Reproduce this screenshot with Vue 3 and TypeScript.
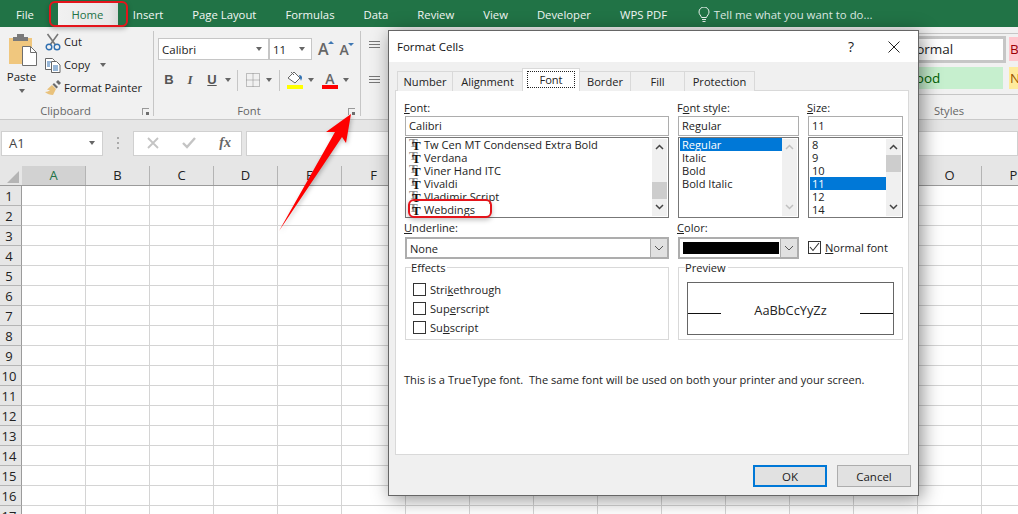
<script setup lang="ts">
const tabs = ["Insert", "Page Layout", "Formulas", "Data", "Review", "View", "Developer", "WPS PDF"]
const columns = "ABCDEFGHIJKLMNOP".split("")
const rows = Array.from({ length: 17 }, (_, i) => i + 1)
const fonts = ["Tw Cen MT Condensed Extra Bold", "Verdana", "Viner Hand ITC", "Vivaldi", "Vladimir Script", "Webdings"]
const styles = ["Regular", "Italic", "Bold", "Bold Italic"]
const sizes = ["8", "9", "10", "11", "12", "14"]
const dialogTabs = ["Number", "Alignment", "Font", "Border", "Fill", "Protection"]
</script>

<template>
  <div class="app">
    <header class="tabbar">
      <span class="tab">File</span>
      <span class="tab tab-home">Home</span>
      <span v-for="t in tabs" :key="t" class="tab">{{ t }}</span>
      <span class="tell">
        <svg width="12" height="16" viewBox="0 0 12 16" fill="none" stroke="#e8f1ec" stroke-width="1">
          <path d="M3.500 10.500C3 8.500 1 7.500 1 5a5 5 0 0 1 10 0c0 2.500-2 3.500-2.500 5.500z" />
          <path d="M4 12.500h4M4.500 14.500h3" />
        </svg>
        Tell me what you want to do...
      </span>
    </header>

    <section class="ribbon">
      <div class="group clipboard">
        <div class="group-body clip-body">
          <div class="paste">
            <svg width="30" height="32" viewBox="0 0 30 32">
              <path d="M1 4h23v26H1z" fill="#f0c77e" />
              <path d="M5 3h15v4H5z" fill="#7a7a7a" />
              <path d="M9 0h7v4H9z" fill="#7a7a7a" />
              <path d="M14.500 12.500h8l6 6v13h-14z" fill="#fff" stroke="#6e6e6e" />
              <path d="M22.500 12.500v6h6" fill="none" stroke="#6e6e6e" />
            </svg>
            <span class="paste-label">Paste</span>
            <i class="caret"></i>
          </div>
          <div class="clip-actions">
            <div class="clip-row">
              <svg width="16" height="18" viewBox="0 0 16 18" fill="none">
                <path d="M2.500 1l8 11M13 1L5 12" stroke="#777" stroke-width="1.600" />
                <circle cx="4" cy="14" r="2.800" stroke="#2f6fb0" stroke-width="1.400" />
                <circle cx="12" cy="14" r="2.800" stroke="#2f6fb0" stroke-width="1.400" />
              </svg>
              <span>Cut</span>
            </div>
            <div class="clip-row">
              <svg width="16" height="16" viewBox="0 0 16 16" fill="#fff" stroke="#666">
                <path d="M.5 1.500h7l2 2v9h-9z" />
                <path d="M6.500 4.500h5l3.500 3.500v7.500h-8.500z" />
                <path d="M2 5h4M2 7h3M2 9h3M8 9h5M8 11h5M8 13h5" stroke="#2f6fb0" />
              </svg>
              <span>Copy</span>
              <i class="caret copy-caret"></i>
            </div>
            <div class="clip-row">
              <svg width="16" height="16" viewBox="0 0 16 16">
                <path d="M9 3l4 4-1.500 1.500-4-4z" fill="#6b6b6b" />
                <path d="M11 2l2-2 3 3-2 2z" fill="#6b6b6b" />
                <path d="M7 5l4 4-3 6c-3 0-6-1-8-3 2 0 4-1 5-2-1 0-2 0-3-.5z" fill="#e9c27c" />
              </svg>
              <span>Format Painter</span>
            </div>
          </div>
        </div>
        <div class="group-foot">Clipboard<i class="launcher"></i></div>
      </div>

      <div class="group fontgroup">
        <div class="group-body">
          <div class="font-row">
            <div class="rb-select name"><span>Calibri</span><i class="caret"></i></div>
            <div class="rb-select size"><span>11</span><i class="caret"></i></div>
            <span class="grow">A<i class="up"></i></span>
            <span class="shrink">A<i class="down"></i></span>
          </div>
          <div class="font-row second">
            <b class="fmt fmt-b">B</b>
            <i class="fmt fmt-i">I</i>
            <u class="fmt fmt-u">U</u>
            <i class="caret c-u"></i>
            <span class="vsep sep1"></span>
            <svg class="borders" width="14" height="14" viewBox="0 0 14 14" fill="none" stroke="#888" stroke-dasharray="1 1">
              <path d="M.5.5h13v13h-13zM7 .5v13M.5 7h13" />
            </svg>
            <i class="caret c-b"></i>
            <span class="vsep sep2"></span>
            <span class="color-btn fill">
              <svg width="16" height="14" viewBox="0 0 16 14">
                <path d="M1 7l6-6 6 6-5 5z" fill="#fff" stroke="#666" />
                <path d="M4 1l3 3" stroke="#666" fill="none" />
                <path d="M12 4c2 0 3 1 3 3l-1 3-1-3z" fill="#2f6fb0" />
              </svg>
              <i class="bar bar-y"></i>
            </span>
            <i class="caret c-f"></i>
            <span class="color-btn">
              <span class="color-a">A</span>
              <i class="bar bar-r"></i>
            </span>
            <i class="caret c-a"></i>
          </div>
        </div>
        <div class="group-foot">Font<i class="launcher"></i></div>
      </div>

      <div class="group align">
        <div class="align-lines"></div>
        <div class="align-lines"></div>
      </div>

      <div class="group stylesgroup">
        <div class="gallery">
          <div class="st st-normal">Normal</div>
          <div class="st st-bad">Bad</div>
          <div class="st st-good">Good</div>
          <div class="st st-neutral">Neutral</div>
        </div>
        <div class="group-foot">Styles</div>
      </div>
    </section>

    <div class="band"></div>

    <section class="formula">
      <div class="namebox"><span>A1</span><i class="caret"></i></div>
      <span class="dots"></span>
      <div class="fbtns">
        <svg width="12" height="12" viewBox="0 0 12 12" stroke="#c4c4c4" stroke-width="1.800"><path d="M1 1l10 10M11 1L1 11" /></svg>
        <svg width="14" height="12" viewBox="0 0 14 12" fill="none" stroke="#c4c4c4" stroke-width="2.400"><path d="M1 6l4 4 8-9" /></svg>
        <span class="fx">fx</span>
      </div>
      <div class="finput"></div>
    </section>

    <section class="sheet">
      <div class="colhead">
        <div class="corner"><i></i></div>
        <div v-for="c in columns" :key="c" class="col" :class="{ active: c === 'A' }">{{ c }}</div>
      </div>
      <div v-for="r in rows" :key="r" class="row">
        <div class="rowhead">{{ r }}</div>
        <div v-for="c in columns" :key="c" class="cell"></div>
      </div>
    </section>

    <div class="dialog">
      <div class="titlebar">
        <span class="title">Format Cells</span>
        <span class="help">?</span>
        <svg class="close" width="12" height="12" viewBox="0 0 12 12" stroke="#222" stroke-width="1"><path d="M.5.5l11 11M11.500.5l-11 11" /></svg>
      </div>
      <div class="dlg-body">
        <div class="dlg-tabs">
          <span v-for="t in dialogTabs" :key="t" class="dtab" :class="['dtab-' + t.toLowerCase(), { on: t === 'Font' }]">
            <span :class="{ focus: t === 'Font' }">{{ t }}</span>
          </span>
        </div>
        <div class="panel">
          <div class="grid">
            <div class="field">
              <label><u>F</u>ont:</label>
              <div class="txt">Calibri</div>
              <div class="list">
                <div class="items">
                  <div v-for="f in fonts" :key="f" class="item fontitem">
                    <span class="tt"><span class="t1">T</span><span class="t2">T</span></span>{{ f }}
                  </div>
                </div>
                <div class="scroll">
                  <svg class="chev" width="9" height="6" viewBox="0 0 9 6" fill="none" stroke="#444" stroke-width="1.500"><path d="M1 5l3.500-3.500L8 5" /></svg>
                  <i class="thumb thumb-font"></i>
                  <svg class="chev" width="9" height="6" viewBox="0 0 9 6" fill="none" stroke="#444" stroke-width="1.500"><path d="M1 1l3.500 3.500L8 1" /></svg>
                </div>
              </div>
            </div>
            <div class="field">
              <label>F<u>o</u>nt style:</label>
              <div class="txt">Regular</div>
              <div class="list">
                <div class="items">
                  <div v-for="s in styles" :key="s" class="item" :class="{ sel: s === 'Regular' }">{{ s }}</div>
                </div>
                <div class="scroll">
                  <svg class="chev" width="9" height="6" viewBox="0 0 9 6" fill="none" stroke="#c0c0c0" stroke-width="1.500"><path d="M1 5l3.500-3.500L8 5" /></svg>
                  <svg class="chev" width="9" height="6" viewBox="0 0 9 6" fill="none" stroke="#c0c0c0" stroke-width="1.500"><path d="M1 1l3.500 3.500L8 1" /></svg>
                </div>
              </div>
            </div>
            <div class="field">
              <label><u>S</u>ize:</label>
              <div class="txt">11</div>
              <div class="list">
                <div class="items">
                  <div v-for="s in sizes" :key="s" class="item" :class="{ sel: s === '11' }">{{ s }}</div>
                </div>
                <div class="scroll">
                  <svg class="chev" width="9" height="6" viewBox="0 0 9 6" fill="none" stroke="#444" stroke-width="1.500"><path d="M1 5l3.500-3.500L8 5" /></svg>
                  <i class="thumb thumb-size"></i>
                  <svg class="chev" width="9" height="6" viewBox="0 0 9 6" fill="none" stroke="#444" stroke-width="1.500"><path d="M1 1l3.500 3.500L8 1" /></svg>
                </div>
              </div>
            </div>

            <div class="field row2">
              <label><u>U</u>nderline:</label>
              <div class="combo">
                <span>None</span>
                <span class="combo-btn"><svg width="10" height="6" viewBox="0 0 10 6" fill="none" stroke="#555"><path d="M1 1l4 4 4-4" /></svg></span>
              </div>
            </div>
            <div class="field row2">
              <label><u>C</u>olor:</label>
              <div class="combo">
                <span class="swatch"></span>
                <span class="combo-btn"><svg width="10" height="6" viewBox="0 0 10 6" fill="none" stroke="#555"><path d="M1 1l4 4 4-4" /></svg></span>
              </div>
            </div>
            <div class="normalfont">
              <span class="check on">
                <svg width="11" height="10" viewBox="0 0 11 10" fill="none" stroke="#333" stroke-width="1.100"><path d="M1 5l3 3.500L10 1" /></svg>
              </span>
              <span><u>N</u>ormal font</span>
            </div>

            <fieldset class="box effects">
              <legend>Effects</legend>
              <div class="opt"><span class="check"></span><span>Stri<u>k</u>ethrough</span></div>
              <div class="opt"><span class="check"></span><span>Sup<u>e</u>rscript</span></div>
              <div class="opt"><span class="check"></span><span>Su<u>b</u>script</span></div>
            </fieldset>
            <fieldset class="box previewbox">
              <legend>Preview</legend>
              <div class="preview">
                <i class="pline"></i>
                <span class="sample">AaBbCcYyZz</span>
                <i class="pline"></i>
              </div>
            </fieldset>
          </div>
          <p class="note">This is a TrueType font.&nbsp; The same font will be used on both your printer and your screen.</p>
        </div>
        <div class="actions">
          <span class="btn ok">OK</span>
          <span class="btn">Cancel</span>
        </div>
      </div>
    </div>

    <!-- annotations drawn on top of the screenshot -->
    <div class="mark mark-home"></div>
    <div class="mark mark-web"></div>
    <svg class="arrow" width="100" height="140" viewBox="270 100 100 140">
      <path d="M279 231L335 132 326 132 351 114 346 143 342 137z" fill="#fe0000" />
    </svg>
  </div>
</template>

<style>
html, body {
  margin: 0;
  overflow: hidden;
}
</style>

<style scoped>
.app {
  position: relative;
  width: 1018px;
  height: 514px;
  overflow: hidden;
  background: #fff;
  font-family: "Open Sans", "Liberation Sans", sans-serif;
  font-size: 11.2px;
  color: #222;
}

.tabbar {
  display: flex;
  align-items: center;
  height: 27px;
  padding-left: 1.5px;
  background: #217346;
  color: #f2f7f4;
  box-sizing: border-box;
  font-size: 11.3px;
}
.tab {
  padding: 0 14.5px;
  line-height: 25px;
  margin-top: 2px;
}
.tab-home {
  margin-left: 10px;
  padding: 0 15px 0 13px;
  background: linear-gradient(90deg, #f1f1f1, #e8e8e8 85%, #d9d9d9);
  color: #217346;
}
.tell {
  display: flex;
  align-items: center;
  gap: 4px;
  margin-left: 16px;
  margin-top: 2px;
  color: #dce9e2;
  font-size: 11.4px;
}

.ribbon {
  display: flex;
  height: 93px;
  box-sizing: border-box;
  background: #f1f1f1;
  border-bottom: 1px solid #c9c9c9;
}
.group {
  position: relative;
  display: flex;
  flex-direction: column;
  box-sizing: border-box;
}
.group-body {
  flex: 1;
  min-height: 0;
}
.group-foot {
  position: relative;
  height: 13px;
  line-height: 16px;
  text-align: center;
  color: #666;
}
.launcher {
  position: absolute;
  right: 5px;
  top: 5px;
  width: 7px;
  height: 7px;
  border-left: 1px solid #999;
  border-top: 1px solid #999;
  box-sizing: border-box;
}
.launcher::after {
  content: "";
  position: absolute;
  right: 0;
  bottom: 0;
  width: 3px;
  height: 3px;
  background: #6e6e6e;
}

.caret {
  display: inline-block;
  width: 0;
  height: 0;
  border-left: 3.5px solid transparent;
  border-right: 3.5px solid transparent;
  border-top: 4px solid #666;
}

.clipboard {
  width: 154px;
  border-right: 1px solid #c6c6c6;
  margin: 4px 0 3px;
}
.clip-body {
  display: flex;
}
.clipboard .group-foot {
  padding-right: 22px;
}
.paste {
  display: flex;
  flex-direction: column;
  align-items: center;
  width: 43px;
  flex: none;
  padding-top: 3px;
}
.paste svg {
  margin-left: 3px;
  margin-bottom: 2px;
}
.paste-label {
  font-size: 11.5px;
  line-height: 17px;
}
.paste .caret {
  margin-top: 4px;
}
.clip-actions {
  display: flex;
  flex-direction: column;
  padding-left: 2px;
  margin-top: -1px;
}
.clip-row {
  display: flex;
  align-items: center;
  gap: 3px;
  height: 23px;
  white-space: nowrap;
}
.clip-row svg {
  flex: none;
}
.copy-caret {
  margin-left: 7px;
}
.clipboard .launcher {
  right: 4px;
}

.fontgroup {
  width: 207px;
  border-right: 1px solid #c6c6c6;
  margin: 4px 0 3px;
  padding-left: 4px;
}
.fontgroup .group-foot {
  padding-right: 20px;
}
.font-row {
  display: flex;
  align-items: center;
  height: 22px;
  margin-top: 7px;
}
.second {
  margin-top: 9px;
}
.rb-select {
  display: flex;
  align-items: center;
  justify-content: space-between;
  height: 22px;
  padding: 0 6px 0 3px;
  box-sizing: border-box;
  background: #fff;
  border: 1px solid #c6c6c6;
  font-size: 11.5px;
}
.name {
  width: 111px;
}
.size {
  width: 43px;
}
.grow,
.shrink {
  position: relative;
  color: #666;
  font-weight: 600;
}
.grow {
  margin-left: 6px;
  font-size: 16px;
}
.shrink {
  margin-left: 11px;
  font-size: 14px;
}
.up,
.down {
  position: absolute;
  top: 3px;
  right: -5px;
  width: 0;
  height: 0;
  border-left: 3px solid transparent;
  border-right: 3px solid transparent;
}
.up {
  border-bottom: 3px solid #3f78b4;
}
.down {
  border-top: 3px solid #3f78b4;
}

.fmt {
  width: 12px;
  margin-top: -1px;
  text-align: center;
  font-size: 13px;
  color: #555;
  font-family: "Liberation Sans", sans-serif;
}
.fmt-b {
  margin-left: 5px;
}
.fmt-i {
  margin-left: 9px;
  font-family: "Liberation Serif", serif;
  font-weight: bold;
}
.fmt-u {
  margin-left: 10px;
  font-weight: bold;
}
.c-u {
  margin-left: 7px;
}
.vsep {
  width: 1px;
  height: 21px;
  background: #c6c6c6;
}
.sep1 {
  margin-left: 6px;
}
.borders {
  margin-left: 8px;
}
.c-b {
  margin-left: 6px;
}
.sep2 {
  margin-left: 7px;
}
.color-btn {
  display: flex;
  flex-direction: column;
  align-items: center;
  width: 16px;
  margin-left: 8px;
}
.fill {
  margin-left: 7px;
}
.c-f {
  margin-left: 5px;
}
.c-a {
  margin-left: 5px;
}
.color-a {
  font-size: 14px;
  font-weight: 600;
  line-height: 13px;
  color: #666;
}
.bar {
  display: block;
  width: 16px;
  height: 4px;
}
.bar-y {
  background: #ffff00;
}
.bar-r {
  background: #ff0000;
}

.align {
  width: 40px;
  padding: 14px 0 0 8px;
}
.align-lines {
  width: 11px;
  height: 9px;
  margin-bottom: 26px;
  background: repeating-linear-gradient(#777 0 1px, transparent 1px 3px);
}

.stylesgroup {
  margin-left: auto;
  width: 138px;
  margin-top: 6px;
  flex: none;
}
.gallery {
  display: grid;
  grid-template-columns: 126px 20px;
  grid-template-rows: 27px 22px;
  column-gap: 3px;
  row-gap: 4px;
  height: 62px;
  padding: 2px 0 4px;
  box-sizing: border-box;
  border-top: 1px solid #c6c6c6;
  border-bottom: 1px solid #c6c6c6;
  margin-bottom: 8px;
  font-size: 13.5px;
  line-height: 16px;
  white-space: nowrap;
  overflow: hidden;
}
.st {
  display: flex;
  align-items: center;
  padding-left: 26px;
  box-sizing: border-box;
}
.st-normal {
  background: #fff;
  border: 3px solid #c6c6c6;
  padding-left: 23px;
  padding-bottom: 2px;
}
.st-bad,
.st-neutral {
  padding-left: 1px;
}
.st-bad {
  background: #ffc7ce;
  color: #9c0006;
  margin: 1px 0 2px;
}
.st-good {
  background: #c6efce;
  color: #006100;
  margin-right: 3px;
}
.st-neutral {
  background: #ffeb9c;
  color: #9c5700;
}

.band {
  height: 10px;
  background: #e6e6e6;
}

.formula {
  display: flex;
  align-items: center;
  height: 36px;
  padding: 0 0 10px 1px;
  box-sizing: border-box;
  background: #e6e6e6;
}
.namebox {
  display: flex;
  align-items: center;
  justify-content: space-between;
  width: 102px;
  height: 25px;
  padding: 0 7px;
  box-sizing: border-box;
  background: #fff;
  border: 1px solid #d0d0d0;
  font-size: 13px;
  color: #444;
}
.dots {
  width: 2px;
  height: 12px;
  margin: 0 14px;
  background: repeating-linear-gradient(#aaa 0 2px, transparent 2px 5px);
}
.fbtns {
  display: flex;
  align-items: center;
  justify-content: space-between;
  width: 109px;
  height: 25px;
  padding: 0 10px 0 13px;
  box-sizing: border-box;
  background: #fff;
  border: 1px solid #d0d0d0;
}
.fx {
  font-family: "Liberation Serif", serif;
  font-style: italic;
  font-weight: bold;
  font-size: 14px;
  color: #666;
}
.finput {
  flex: 1;
  height: 25px;
  margin-left: 4px;
  background: #fff;
  border: 1px solid #d0d0d0;
  box-sizing: border-box;
}

.sheet {
  width: 1046px;
}
.colhead {
  display: flex;
  height: 20px;
  background: #e6e6e6;
  border-bottom: 1px solid #9b9b9b;
  box-sizing: border-box;
}
.corner {
  position: relative;
  width: 22px;
  flex: none;
}
.corner i {
  position: absolute;
  right: 3px;
  bottom: 2px;
  width: 0;
  height: 0;
  border-left: 12px solid transparent;
  border-bottom: 12px solid #b5b5b5;
}
.col {
  width: 64px;
  flex: none;
  text-align: center;
  line-height: 19px;
  font-size: 13px;
  color: #222;
  box-sizing: border-box;
  border-right: 1px solid #b4b4b4;
}
.col.active {
  background: #d2d2d2;
  color: #217346;
}
.row {
  display: flex;
  height: 20px;
}
.rowhead {
  width: 22px;
  flex: none;
  box-sizing: border-box;
  padding-right: 3px;
  text-align: center;
  line-height: 20px;
  font-size: 13px;
  background: #e6e6e6;
  border-right: 1px solid #9b9b9b;
  border-bottom: 1px solid #b4b4b4;
  color: #222;
}
.cell {
  width: 64px;
  flex: none;
  box-sizing: border-box;
  border-right: 1px solid #d4d4d4;
  border-bottom: 1px solid #d4d4d4;
}

.dialog {
  position: absolute;
  left: 388px;
  top: 30px;
  width: 531px;
  height: 466px;
  box-sizing: border-box;
  display: flex;
  flex-direction: column;
  border: 1px solid #666;
  background: #f0f0f0;
  font-size: 11.1px;
  box-shadow: 3px 3px 18px rgba(0, 0, 0, 0.45);
}
.titlebar {
  display: flex;
  align-items: center;
  flex: none;
  height: 31px;
  padding: 0 18px 0 8px;
  background: #fff;
  font-size: 11.5px;
}
.title {
  flex: 1;
  color: #111;
}
.help {
  margin-right: 34px;
  font-size: 14px;
}
.dlg-body {
  flex: 1;
  display: flex;
  flex-direction: column;
  padding: 7px 9px 9px 6px;
}
.dlg-tabs {
  display: flex;
  align-items: flex-end;
  height: 22px;
  padding-left: 2px;
  position: relative;
  z-index: 1;
  margin-bottom: -1px;
}
.dtab {
  display: flex;
  align-items: center;
  justify-content: center;
  height: 20px;
  box-sizing: border-box;
  border: 1px solid #d9d9d9;
  border-left: 0;
  border-bottom: 0;
  background: #f0f0f0;
}
.dtab-number {
  width: 56px;
  border-left: 1px solid #d9d9d9;
}
.dtab-alignment {
  width: 70px;
}
.dtab-font {
  width: 58px;
}
.dtab-border {
  width: 51px;
}
.dtab-fill {
  width: 54px;
}
.dtab-protection {
  width: 70px;
}
.dtab.on {
  height: 23px;
  background: #fff;
  border-left: 1px solid #d9d9d9;
  margin-left: -1px;
  padding-bottom: 1px;
}
.focus {
  padding: 0 11px;
  outline: 1px dotted #222;
  outline-offset: 0;
  line-height: 15px;
}
.panel {
  flex: none;
  height: 365px;
  box-sizing: border-box;
  padding: 9px 9px 0 9px;
  background: #fff;
  border: 1px solid #d9d9d9;
}
.grid {
  display: grid;
  grid-template-columns: 264px 121px 95px;
  column-gap: 9px;
}
.field label {
  display: block;
  height: 16px;
  line-height: 15px;
  margin-left: -1px;
}
.txt {
  height: 20px;
  line-height: 18px;
  padding-left: 3px;
  box-sizing: border-box;
  border: 1px solid #adadad;
}
.list {
  display: flex;
  height: 81px;
  margin-top: 1px;
  box-sizing: border-box;
  border: 1px solid #777;
  padding: 0 1px;
}
.items {
  flex: 1;
  min-width: 0;
}
.item {
  height: 13px;
  line-height: 13px;
  padding-left: 2px;
  white-space: nowrap;
}
.item.sel {
  background: #0078d7;
  color: #fff;
}
.fontitem {
  display: flex;
  align-items: center;
}
.tt {
  position: relative;
  width: 15px;
  height: 13px;
  flex: none;
  font-family: "Liberation Serif", serif;
  font-weight: bold;
  font-size: 13px;
  line-height: 13px;
}
.t1,
.t2 {
  position: absolute;
}
.t1 {
  left: 0;
  top: -2px;
  color: #8f8f8f;
}
.t2 {
  left: 3px;
  top: 1px;
  color: #111;
}
.scroll {
  display: flex;
  flex-direction: column;
  align-items: center;
  justify-content: space-between;
  width: 15px;
  margin: 1px 0;
  padding: 5px 0 6px;
  box-sizing: border-box;
  background: #f0f0f0;
  position: relative;
}
.chev {
  flex: none;
}
.thumb {
  position: absolute;
  left: 0;
  right: 0;
  background: #cdcdcd;
}
.thumb-font {
  top: 43px;
  height: 17px;
}
.thumb-size {
  top: 16px;
  height: 17px;
}
.row2 {
  margin-top: 1px;
}
.row2 label {
  height: 18px;
  line-height: 17px;
}
.combo {
  display: flex;
  align-items: center;
  height: 22px;
  box-sizing: border-box;
  border: 2px solid #adadad;
  padding-left: 3px;
  justify-content: space-between;
  border-right-width: 1px;
}
.combo-btn {
  display: flex;
  align-items: center;
  justify-content: center;
  width: 16px;
  height: 18px;
  background: #e1e1e1;
  border-left: 1px solid #adadad;
  border-right: 1px solid #adadad;
}
.swatch {
  width: 96px;
  height: 12px;
  background: #000;
}
.check {
  display: inline-flex;
  align-items: center;
  justify-content: center;
  width: 13px;
  height: 13px;
  flex: none;
  box-sizing: border-box;
  border: 1px solid #333;
  background: #fff;
}
.normalfont {
  display: flex;
  align-items: center;
  gap: 4px;
  margin-top: 20px;
  height: 18px;
}
.box {
  margin: 2px 0 0;
  padding: 0;
  border: 1px solid #d9d9d9;
  height: 79px;
  box-sizing: border-box;
  min-width: 0;
}
.box legend {
  margin-left: -2px;
  padding: 0 2px 0 0;
  line-height: 13px;
}
.effects {
  padding: 6px 0 0 7px;
}
.opt {
  display: flex;
  align-items: center;
  gap: 4px;
  height: 19px;
}
.previewbox {
  grid-column: 2 / 4;
  padding: 8px 8px 0 8px;
}
.preview {
  display: flex;
  align-items: center;
  justify-content: space-between;
  height: 53px;
  box-sizing: border-box;
  border: 1px solid #666;
}
.pline {
  width: 33px;
  height: 1px;
  margin-top: 10px;
  background: #111;
}
.sample {
  font-size: 12.8px;
  margin-top: 3px;
}
.note {
  margin: 32px 0 0 -1px;
  line-height: 16px;
}
.actions {
  display: flex;
  justify-content: flex-end;
  gap: 10px;
  margin: 10px -2px 0 0;
}
.btn {
  display: flex;
  align-items: center;
  justify-content: center;
  width: 74px;
  height: 22px;
  box-sizing: border-box;
  border: 1px solid #adadad;
  background: #e1e1e1;
  font-size: 11.5px;
}
.ok {
  border: 2px solid #0078d7;
}

.mark {
  position: absolute;
  box-sizing: border-box;
  border: 2px solid #e4141b;
  border-radius: 6px;
  box-shadow: 0 2px 5px rgba(0, 0, 0, 0.25);
}
.mark-home {
  left: 49px;
  top: 1px;
  width: 79px;
  height: 26px;
}
.mark-web {
  left: 408px;
  top: 199px;
  width: 84px;
  height: 19px;
}
.arrow {
  position: absolute;
  left: 270px;
  top: 100px;
  filter: drop-shadow(1px 2px 2px rgba(0, 0, 0, 0.25));
}
</style>
